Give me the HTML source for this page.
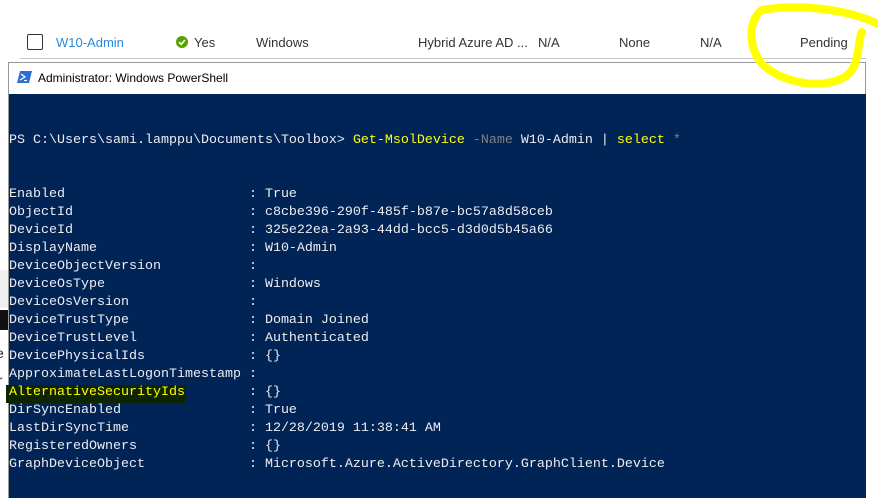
<!DOCTYPE html>
<html><head><style>
html,body{margin:0;padding:0;width:878px;height:498px;overflow:hidden;background:#fff;position:relative;font-family:"Liberation Sans",sans-serif}
.t{position:absolute;top:35px;font-size:13px;color:#333}
pre{margin:0;font-family:"Liberation Mono",monospace;font-size:13.33px;line-height:18px;color:#eeedf0;position:absolute;left:9px;top:132px;white-space:pre}
.y{color:#ffff00}.g{color:#808080}
</style></head><body>
<div style="position:absolute;left:27px;top:34px;width:16px;height:16px;border:1px solid #333;border-radius:2px;box-sizing:border-box"></div>
<div class="t" style="left:56px;color:#2b88d8">W10-Admin</div>
<div style="position:absolute;left:176px;top:36px;width:12px;height:12px;border-radius:50%;background:#57a300"></div>
<svg style="position:absolute;left:176px;top:36px" width="12" height="12"><path d="M3 6.2 L5.2 8.3 L9 4" stroke="#fff" stroke-width="1.6" fill="none"/></svg>
<div class="t" style="left:194px">Yes</div>
<div class="t" style="left:256px">Windows</div>
<div class="t" style="left:418px">Hybrid Azure AD ...</div>
<div class="t" style="left:538px">N/A</div>
<div class="t" style="left:619px">None</div>
<div class="t" style="left:700px">N/A</div>
<div class="t" style="left:800px">Pending</div>
<div style="position:absolute;left:20px;top:58px;width:846px;height:1px;background:#c8c8c8"></div>
<div style="position:absolute;left:0;top:270px;width:8px;height:38px;background:#f0f0f0"></div>
<div style="position:absolute;left:0;top:310px;width:8px;height:20px;background:#111"></div>
<div style="position:absolute;left:-4px;top:345px;font-size:14px;color:#222">e</div>
<div style="position:absolute;left:-10px;top:372px;font-size:14px;color:#222">or</div>
<div style="position:absolute;left:8px;top:62px;width:858px;height:436px;border:1px solid #999;border-bottom:none;box-sizing:border-box;background:#fff"></div>
<svg style="position:absolute;left:17px;top:71px" width="15" height="12"><path d="M3 0 H15 L12 12 H0 Z" fill="#2c6fd4"/><path d="M4 3 L8 6 L3 9" stroke="#fff" stroke-width="1.3" fill="none"/><path d="M7 9.5 H10" stroke="#fff" stroke-width="1.2"/></svg>
<div style="position:absolute;left:38px;top:71px;font-size:12px;color:#000">Administrator: Windows PowerShell</div>
<div style="position:absolute;left:9px;top:94px;width:857px;height:404px;background:#012456"></div>
<div style="position:absolute;left:6px;top:385px;width:180px;height:18px;background:#0f2400"></div>
<pre>PS C:\Users\sami.lamppu\Documents\Toolbox&gt; <span class="y">Get-MsolDevice</span> <span class="g">-Name</span> W10-Admin | <span class="y">select</span> <span class="g">*</span>


Enabled                       : True
ObjectId                      : c8cbe396-290f-485f-b87e-bc57a8d58ceb
DeviceId                      : 325e22ea-2a93-44dd-bcc5-d3d0d5b45a66
DisplayName                   : W10-Admin
DeviceObjectVersion           :
DeviceOsType                  : Windows
DeviceOsVersion               :
DeviceTrustType               : Domain Joined
DeviceTrustLevel              : Authenticated
DevicePhysicalIds             : {}
ApproximateLastLogonTimestamp :
<span class="y">AlternativeSecurityIds</span>        : {}
DirSyncEnabled                : True
LastDirSyncTime               : 12/28/2019 11:38:41 AM
RegisteredOwners              : {}
GraphDeviceObject             : Microsoft.Azure.ActiveDirectory.GraphClient.Device</pre>
<svg style="position:absolute;left:0;top:0" width="878" height="100"><path d="M878 24 C845 8 795 4 762 10 C748 20 748 48 762 64 C790 90 845 90 854 66 C860 52 858 40 862 32" stroke="#ffff00" stroke-width="8" fill="none" stroke-linecap="round"/></svg>
</body></html>
